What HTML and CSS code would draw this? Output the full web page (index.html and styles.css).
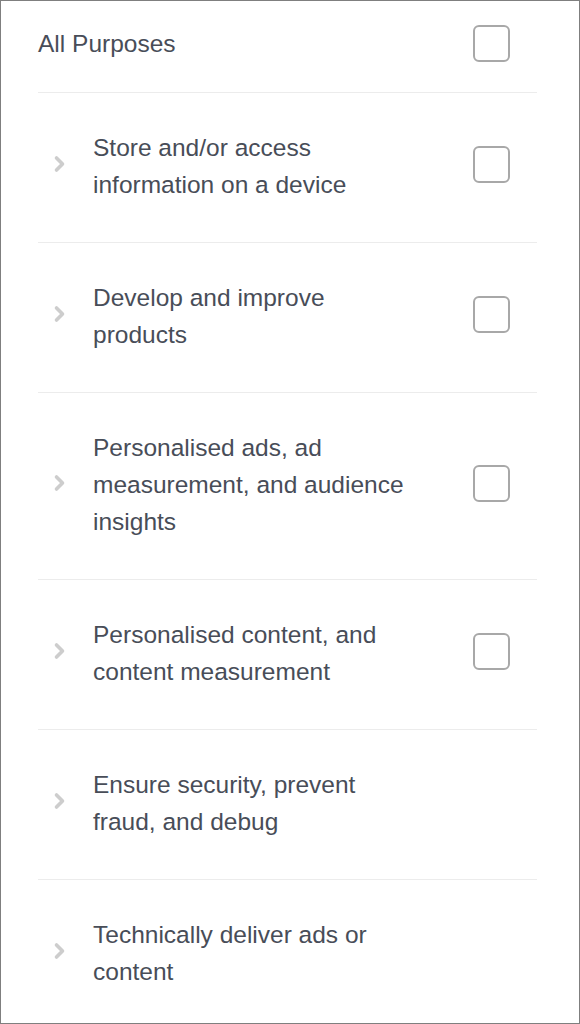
FILE: index.html
```html
<!DOCTYPE html>
<html lang="en">
<head>
<meta charset="utf-8">
<title>Purposes</title>
<link rel="stylesheet" href="styles.css">
</head>
<body>
<div class="panel">
  <div class="row-all">
    <span class="label">All Purposes</span>
    <span class="checkbox"></span>
  </div>

  <div class="row">
    <span class="chev"><svg width="14" height="18" viewBox="0 0 14 18"><path d="M3.5 3 L9.5 9 L3.5 15" fill="none" stroke="#cdcdcd" stroke-width="3.6" stroke-linecap="round" stroke-linejoin="round"/></svg></span>
    <span class="text">Store and/or access information on a device</span>
    <span class="checkbox"></span>
  </div>

  <div class="row">
    <span class="chev"><svg width="14" height="18" viewBox="0 0 14 18"><path d="M3.5 3 L9.5 9 L3.5 15" fill="none" stroke="#cdcdcd" stroke-width="3.6" stroke-linecap="round" stroke-linejoin="round"/></svg></span>
    <span class="text">Develop and improve products</span>
    <span class="checkbox"></span>
  </div>

  <div class="row">
    <span class="chev"><svg width="14" height="18" viewBox="0 0 14 18"><path d="M3.5 3 L9.5 9 L3.5 15" fill="none" stroke="#cdcdcd" stroke-width="3.6" stroke-linecap="round" stroke-linejoin="round"/></svg></span>
    <span class="text">Personalised ads, ad measurement, and audience insights</span>
    <span class="checkbox"></span>
  </div>

  <div class="row">
    <span class="chev"><svg width="14" height="18" viewBox="0 0 14 18"><path d="M3.5 3 L9.5 9 L3.5 15" fill="none" stroke="#cdcdcd" stroke-width="3.6" stroke-linecap="round" stroke-linejoin="round"/></svg></span>
    <span class="text">Personalised content, and content measurement</span>
    <span class="checkbox"></span>
  </div>

  <div class="row">
    <span class="chev"><svg width="14" height="18" viewBox="0 0 14 18"><path d="M3.5 3 L9.5 9 L3.5 15" fill="none" stroke="#cdcdcd" stroke-width="3.6" stroke-linecap="round" stroke-linejoin="round"/></svg></span>
    <span class="text">Ensure security, prevent fraud, and debug</span>
  </div>

  <div class="row">
    <span class="chev"><svg width="14" height="18" viewBox="0 0 14 18"><path d="M3.5 3 L9.5 9 L3.5 15" fill="none" stroke="#cdcdcd" stroke-width="3.6" stroke-linecap="round" stroke-linejoin="round"/></svg></span>
    <span class="text">Technically deliver ads or content</span>
  </div>
</div>
</body>
</html>
```

FILE: styles.css
```css
html, body {
  margin: 0;
  padding: 0;
  background: #ffffff;
}

.panel {
  box-sizing: border-box;
  height: 1024px;
  width: 580px;
  border: 1px solid #7f7f7f;
  padding: 0 42px 0 37px;
  overflow: hidden;
  font-family: "Liberation Sans", Arial, sans-serif;
  font-size: 24.5px;
  line-height: 37px;
  color: #484d58;
}

.row-all {
  display: flex;
  align-items: center;
  justify-content: space-between;
  padding: 23px 27px 30px 0;
  border-bottom: 1px solid #ececec;
}

.row-all .checkbox {
  margin-top: 1px;
}

.row {
  display: flex;
  align-items: center;
  padding: 36px 27px 39px 0;
  border-bottom: 1px solid #ececec;
}

.row:last-child {
  border-bottom: none;
}

.chev {
  flex: 0 0 55px;
  display: flex;
  padding-left: 15px;
  box-sizing: border-box;
  margin-bottom: 4px;
}

.text {
  flex: 0 1 322px;
  max-width: 322px;
}

.checkbox {
  flex: 0 0 auto;
  box-sizing: border-box;
  width: 37px;
  height: 37px;
  border: 2px solid #a8a8a8;
  border-radius: 6px;
  margin-left: auto;
  background: #fff;
}

.row .checkbox {
  margin-bottom: 3px;
}
```
